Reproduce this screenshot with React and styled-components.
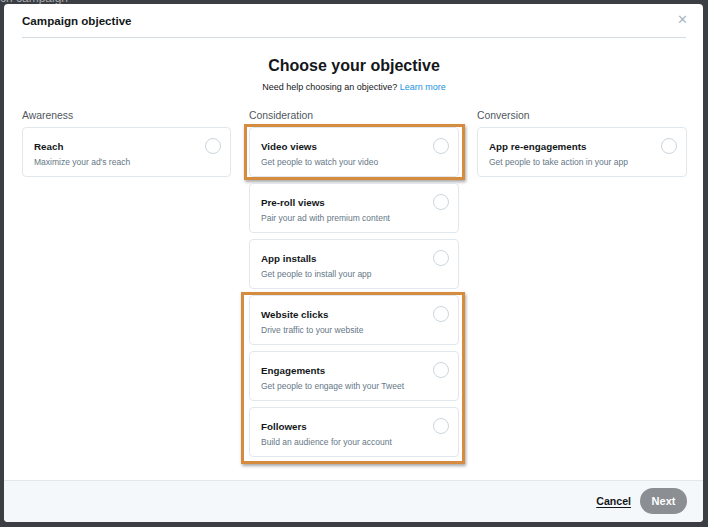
import React from "react";
import styled, { createGlobalStyle } from "styled-components";

const GlobalStyle = createGlobalStyle`
  html, body {
    margin: 0;
    padding: 0;
    background: #3b3e42;
    font-family: "Liberation Sans", Arial, sans-serif;
    -webkit-font-smoothing: antialiased;
  }
`;

const Page = styled.div`
  width: 708px;
  height: 527px;
  box-sizing: border-box;
  padding: 0 5px 5px 4px;
  overflow: hidden;
`;

const BehindStrip = styled.div`
  height: 4px;
  overflow: hidden;
  margin-left: -4px;
`;

const BehindText = styled.div`
  margin-top: -9px;
  font-size: 12px;
  line-height: 14px;
  color: #a4a8ad;
`;

const Modal = styled.div`
  height: 518px;
  background: #fff;
  border-radius: 4px;
  display: flex;
  flex-direction: column;
  overflow: hidden;
`;

const Header = styled.div`
  height: 33px;
  margin: 0 17px 0 18px;
  border-bottom: 1px solid #d4dde4;
  display: flex;
  align-items: center;
  justify-content: space-between;
`;

const ModalTitle = styled.div`
  font-size: 11.6px;
  font-weight: 700;
  color: #14171a;
`;

const Close = styled.span`
  font-size: 13px;
  color: #aab8c2;
  margin-right: -2px;
  margin-top: -2px;
`;

const Body = styled.div`
  flex: 1;
  padding: 0 17px 0 18px;
`;

const Heading = styled.h1`
  margin: 18px 0 0;
  font-size: 16px;
  line-height: 20px;
  font-weight: 700;
  text-align: center;
  color: #14171a;
`;

const Sub = styled.p`
  margin: 5px 0 0;
  font-size: 9px;
  line-height: 12px;
  text-align: center;
  color: #14171a;
`;

const Link = styled.a`
  color: #1b95e0;
  text-decoration: none;
`;

const Columns = styled.div`
  margin-top: 16px;
  display: grid;
  grid-template-columns: 209px 210px 210px;
  column-gap: 18px;
  align-items: start;
`;

const Column = styled.div`
  display: flex;
  flex-direction: column;
  gap: 6px;
`;

const ColumnLabel = styled.div`
  font-size: 10.4px;
  line-height: 14px;
  color: #4f575e;
  margin-bottom: -2px;
`;

const Card = styled.div`
  height: 50px;
  box-sizing: border-box;
  border: 1px solid #e1e8ed;
  border-radius: 4px;
  padding: 10px 9px 0 11px;
  display: flex;
  justify-content: space-between;
  align-items: flex-start;
  background: #fff;
`;

const CardText = styled.div`
  padding-top: 2px;
`;

const CardTitle = styled.div`
  font-size: 9.8px;
  line-height: 14px;
  font-weight: 700;
  color: #14171a;
`;

const CardDesc = styled.div`
  margin-top: 2px;
  font-size: 8.5px;
  line-height: 12px;
  color: #657786;
`;

const Radio = styled.span`
  width: 16px;
  height: 16px;
  box-sizing: border-box;
  border: 1px solid #ccd6dd;
  border-radius: 50%;
  flex-shrink: 0;
`;

const Highlight = styled.div`
  border: 3px solid #d68c3f;
  box-shadow: 1px 2px 3px rgba(0, 0, 0, 0.35);
  display: flex;
  flex-direction: column;
  gap: 6px;
  margin: ${(p) => p.$m};
  padding: ${(p) => p.$p};
`;

const Footer = styled.div`
  height: 42px;
  box-sizing: border-box;
  border-top: 1px solid #e1e8ed;
  background: #f5f8fa;
  display: flex;
  justify-content: flex-end;
  align-items: center;
  gap: 9px;
  padding: 0 16px 1px 0;
`;

const Cancel = styled.a`
  font-size: 10.6px;
  font-weight: 700;
  color: #14171a;
  text-decoration: underline;
  text-underline-offset: 2px;
`;

const NextButton = styled.button`
  width: 47px;
  height: 26px;
  border: none;
  border-radius: 13px;
  background: #8b8e92;
  color: #fff;
  font-family: inherit;
  font-size: 11px;
  font-weight: 700;
  padding: 0;
`;

const Objective = ({ title, desc }) => (
  <Card>
    <CardText>
      <CardTitle>{title}</CardTitle>
      <CardDesc>{desc}</CardDesc>
    </CardText>
    <Radio />
  </Card>
);

export default function App() {
  return (
    <Page>
      <GlobalStyle />
      <BehindStrip>
        <BehindText>ch campaign</BehindText>
      </BehindStrip>
      <Modal>
        <Header>
          <ModalTitle>Campaign objective</ModalTitle>
          <Close>✕</Close>
        </Header>
        <Body>
          <Heading>Choose your objective</Heading>
          <Sub>
            Need help choosing an objective? <Link>Learn more</Link>
          </Sub>
          <Columns>
            <Column>
              <ColumnLabel>Awareness</ColumnLabel>
              <Objective title="Reach" desc="Maximize your ad's reach" />
            </Column>
            <Column>
              <ColumnLabel>Consideration</ColumnLabel>
              <Highlight $m="-3px -6px -3px -5px" $p="0 3px 0 2px">
                <Objective title="Video views" desc="Get people to watch your video" />
              </Highlight>
              <Objective title="Pre-roll views" desc="Pair your ad with premium content" />
              <Objective title="App installs" desc="Get people to install your app" />
              <Highlight $m="-3px -6px -7px -8px" $p="0 3px 4px 5px">
                <Objective title="Website clicks" desc="Drive traffic to your website" />
                <Objective title="Engagements" desc="Get people to engage with your Tweet" />
                <Objective title="Followers" desc="Build an audience for your account" />
              </Highlight>
            </Column>
            <Column>
              <ColumnLabel>Conversion</ColumnLabel>
              <Objective title="App re-engagements" desc="Get people to take action in your app" />
            </Column>
          </Columns>
        </Body>
        <Footer>
          <Cancel>Cancel</Cancel>
          <NextButton>Next</NextButton>
        </Footer>
      </Modal>
    </Page>
  );
}
